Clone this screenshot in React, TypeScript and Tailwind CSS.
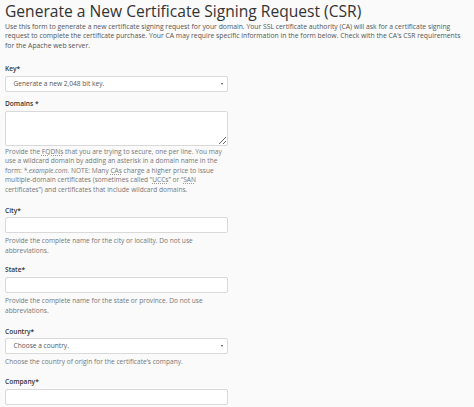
import React from "react";

const font = { fontFamily: '"Open Sans", "Noto Sans", sans-serif' };

function Abbr({ children }: { children: React.ReactNode }) {
  return <span className="underline decoration-dotted decoration-[#999]">{children}</span>;
}

function Label({ children }: { children: React.ReactNode }) {
  return <label className="block text-[6.6px] leading-[9.4px] font-semibold text-[#333] mb-[2.5px]">{children}</label>;
}

function Help({ children }: { children: React.ReactNode }) {
  return <p className="mt-[3px] text-[6.6px] leading-[9.4px] text-[#777]">{children}</p>;
}

function Input() {
  return <div className="h-4 w-[223px] rounded-[2px] border border-[#d9d9d9] bg-white" />;
}

function Select({ text }: { text: string }) {
  return (
    <div className="flex h-4 w-[223px] items-center justify-between rounded-[2px] border border-[#d9d9d9] bg-white pl-[7.5px] pr-[4px]">
      <span className="text-[6.6px] text-[#555]">{text}</span>
      <span className="h-0 w-0 border-x-[1.5px] border-t-[2px] border-x-transparent border-t-[#444]" />
    </div>
  );
}

export default function App() {
  return (
    <div className="min-h-[407px] bg-[#fafafa] px-[5px]" style={font}>
      <h1 className="text-[15.6px] leading-[22px] font-normal text-[#333]">Generate a New Certificate Signing Request (CSR)</h1>
      <p className="text-[6.8px] leading-[9.4px] text-[#555]">
        Use this form to generate a new certificate signing request for your domain. Your SSL certificate authority (CA) will ask for a certificate signing request to complete the certificate purchase. Your CA may require specific information in the form below. Check with the CA’s CSR requirements for the Apache web server.
      </p>

      <div className="mt-[14px] mb-[7px]">
        <Label>Key*</Label>
        <Select text="Generate a new 2,048 bit key." />
      </div>

      <div className="mb-[11.5px] w-[223px]">
        <Label>Domains *</Label>
        <textarea className="block h-[34.5px] w-[223px] rounded-[2px] border border-[#d9d9d9] bg-white" />
        <p className="mt-[1.5px] text-[6.6px] leading-[9.4px] text-[#777]">
          Provide the <Abbr>FQDNs</Abbr> that you are trying to secure, one per line. You may use a wildcard domain by adding an asterisk in a domain name in the form: <em>*.example.com</em>. NOTE: Many <Abbr>CAs</Abbr> charge a higher price to issue multiple-domain certificates (sometimes called “<Abbr>UCCs</Abbr>” or “<Abbr>SAN</Abbr> certificates”) and certificates that include wildcard domains.
        </p>
      </div>

      <div className="mb-[10px] w-[223px]">
        <Label>City*</Label>
        <Input />
        <Help>Provide the complete name for the city or locality. Do not use abbreviations.</Help>
      </div>

      <div className="mb-[11.5px] w-[223px]">
        <Label>State*</Label>
        <Input />
        <Help>Provide the complete name for the state or province. Do not use abbreviations.</Help>
      </div>

      <div className="mb-[10.5px]">
        <Label>Country*</Label>
        <Select text="Choose a country." />
        <Help>Choose the country of origin for the certificate’s company.</Help>
      </div>

      <div>
        <Label>Company*</Label>
        <Input />
      </div>
    </div>
  );
}
